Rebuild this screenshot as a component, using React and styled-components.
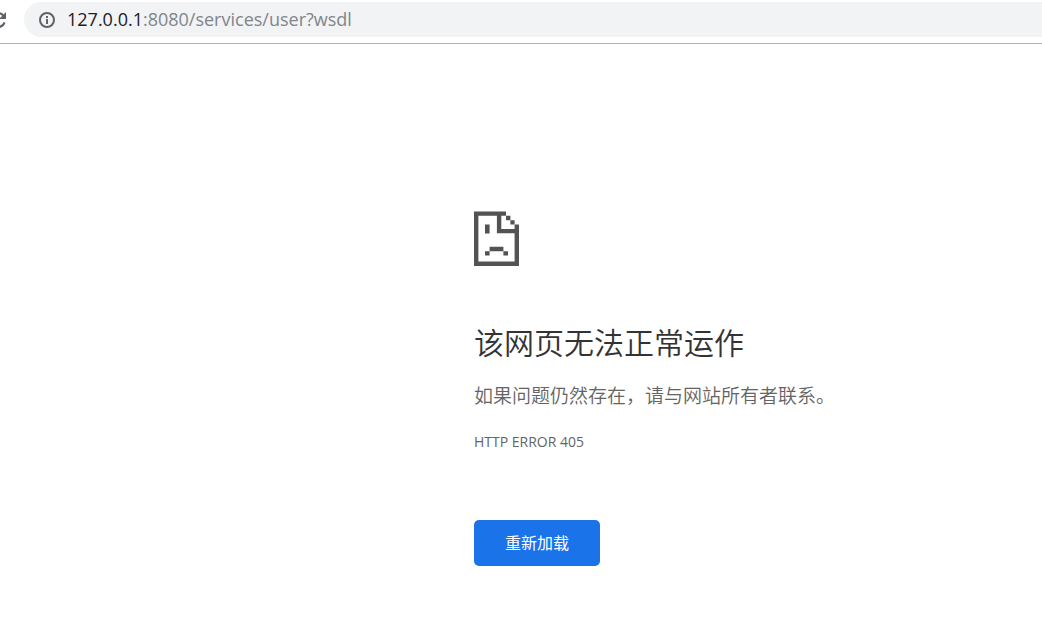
import React from "react";
import styled, { createGlobalStyle } from "styled-components";

const App = () => {
  return (
    <>
      <GlobalStyle />
      <Toolbar>
        <ReloadButton type="button" aria-label="重新加载此页">
          <ReloadIcon />
        </ReloadButton>
        <AddressBar>
          <InfoIcon />
          <Address role="textbox" aria-label="地址" tabIndex={0}>
            <Host>127.0.0.1</Host>:8080/services/user?wsdl
          </Address>
        </AddressBar>
      </Toolbar>
      <ErrorPage>
        <SadPageIcon />
        <Heading>该网页无法正常运作</Heading>
        <Message>如果问题仍然存在，请与网站所有者联系。</Message>
        <ErrorCode>HTTP ERROR 405</ErrorCode>
        <PrimaryButton type="button" onClick={() => window.location.reload()}>
          重新加载
        </PrimaryButton>
      </ErrorPage>
    </>
  );
};

const ReloadIcon = () => (
  <svg width="20" height="20" viewBox="0 0 20 20" fill="none" aria-hidden="true">
    <path d="M16.5 5.8A6.9 6.9 0 1 0 17.6 12.5" stroke="#5f6368" strokeWidth="2.2" />
    <path d="M19 2v7h-7z" fill="#5f6368" />
  </svg>
);

const InfoIcon = () => (
  <svg width="16" height="16" viewBox="0 0 16 16" aria-hidden="true">
    <circle cx="8" cy="8" r="7" fill="none" stroke="#5f6368" strokeWidth="2" />
    <path d="M7 4h2v2H7zM7 7h2v5H7z" fill="#5f6368" />
  </svg>
);

const SadPageIcon = () => (
  <svg width="45" height="55" viewBox="0 0 45 55" fill="#535353" aria-hidden="true">
    {/* sheet outline and folded corner */}
    <path d="M0 .5h32v4.3h-4.7v13.2H45v37H0zM4.4 4.8v45.8h36.2V22.3H22.9V4.8z" />
    <path d="M32 4.8h4.4v4.4H32zM36.4 9.2h4.2v4.4h-4.2zM40.6 13.6H45V19h-4.4z" />
    {/* face */}
    <path d="M11 13.6h4.6v9H11zM15.6 35.8h13.8v4.4H15.6zM11 40.2h4.6v4.2H11zM29.4 40.2H34v4.2h-4.6z" />
  </svg>
);

const GlobalStyle = createGlobalStyle`
  * {
    box-sizing: border-box;
  }
  body {
    margin: 0;
    background-color: #fff;
    color: #646464;
    font-family: "Open Sans", "Noto Sans CJK SC", sans-serif;
  }
`;

const Toolbar = styled.header`
  display: flex;
  align-items: center;
  height: 44px;
  padding: 2px 0 6px;
  border-bottom: 1px solid #b0b0b0;
  overflow: hidden;
`;
const ReloadButton = styled.button`
  display: flex;
  flex-shrink: 0;
  width: 20px;
  margin-left: -13px;
  padding: 0;
  border: none;
  background: none;
`;
const AddressBar = styled.div`
  display: flex;
  flex: 1;
  align-items: center;
  gap: 12px;
  height: 35px;
  margin-left: 17px;
  padding-left: 15px;
  border-radius: 18px 0 0 18px;
  background-color: #f1f3f4;
`;
const Address = styled.div`
  padding-bottom: 2px;
  color: #80868b;
  font-size: 18px;
  line-height: 24px;
  white-space: nowrap;
`;
const Host = styled.span`
  color: #202124;
`;
const ErrorPage = styled.main`
  display: flex;
  flex-direction: column;
  align-items: flex-start;
  padding: 167px 24px 48px 474px;
`;
const Heading = styled.h1`
  margin: 55px 0 0;
  color: #333;
  font-size: 30px;
  font-weight: 350;
  line-height: 44px;
  white-space: nowrap;
`;
const Message = styled.p`
  margin: 17px 0 0;
  font-size: 19px;
  font-weight: 350;
  line-height: 28px;
  white-space: nowrap;
`;
const ErrorCode = styled.p`
  margin: 20px 0 0;
  font-size: 14px;
  line-height: 24px;
`;
const PrimaryButton = styled.button`
  height: 46px;
  margin-top: 66px;
  padding: 0 31px;
  border: none;
  border-radius: 5px;
  background-color: #1a73e8;
  color: #fff;
  font-family: inherit;
  font-size: 16px;
  line-height: 24px;
  cursor: pointer;
`;

export default App;
